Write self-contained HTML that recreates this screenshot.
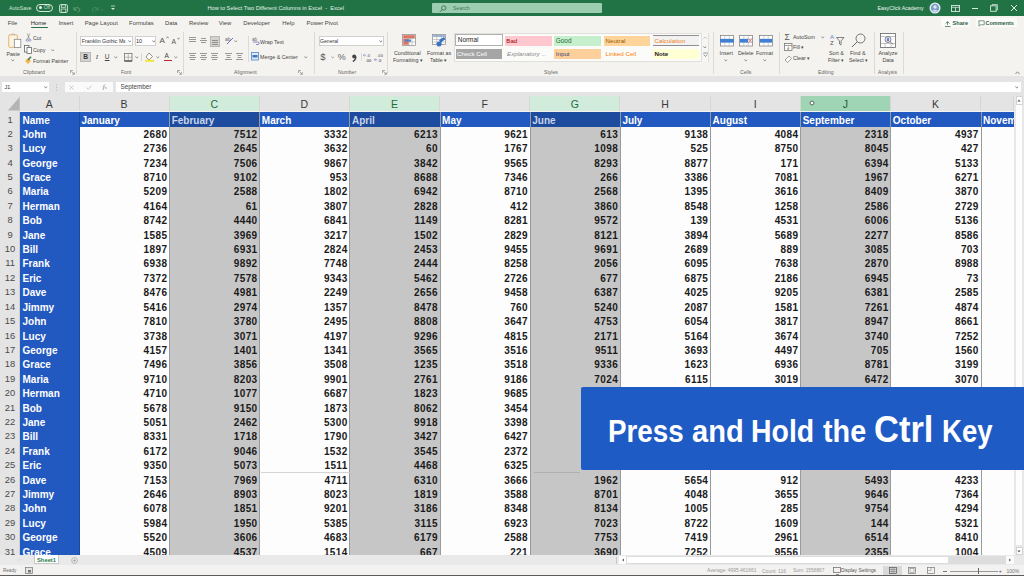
<!DOCTYPE html>
<html><head><meta charset="utf-8">
<style>
*{margin:0;padding:0;box-sizing:border-box}
html,body{width:1024px;height:576px;overflow:hidden;background:#f4f3ef;font-family:"Liberation Sans",sans-serif}
.abs{position:absolute}
#grid{position:absolute;left:0;top:0;width:1014.4px;height:555.4px;overflow:hidden}
.ch{position:absolute;top:96px;height:15.299999999999997px;line-height:17.299999999999997px;background:#e4e4e4;color:#3a3a3a;font-size:10.5px;text-align:center;border-right:1px solid #d6d6d6}
.chs{background:#d2ecdc;color:#1e6b40}
.cha{background:#9fd5b4;color:#1e5e3a}
.rh{position:absolute;left:0;width:20px;background:#e4e4e4;color:#4a4a4a;font-size:9.4px;text-align:center;padding-left:1px;border-right:1px solid #d0d0d0}
.cb{position:absolute;top:126.8px;height:428.59999999999997px}
.blue{background:#2259c0}
.gray{background:#c6c6c6}
.r1{position:absolute;left:20px;width:994.4px;background:#2259c0}
.r1s{position:absolute;background:#1d4b9e}
.vl{position:absolute;top:111.5px;height:443.9px;width:1px;background:#9a9a9a}
.t1,.tn{position:absolute;transform:translateY(0.7px);color:#fff;font-weight:bold;font-size:10px;white-space:nowrap}
.t1s{color:#c9d5ea}
.td{position:absolute;transform:translateY(1.1px);color:#1a1a1a;font-weight:bold;font-size:10px;text-align:right;letter-spacing:0.4px;white-space:nowrap}
#white{position:absolute;left:20px;top:126.8px;width:994.4px;height:428.59999999999997px;background:#fdfdfd}
#banner{position:absolute;left:580.8px;top:387.2px;width:460px;height:82.4px;background:#1f5bc4;border-radius:2px}
.bw{position:absolute;color:#fff;font-weight:bold;white-space:nowrap;line-height:1;transform-origin:0 0}
.tx{white-space:nowrap}
</style></head><body>
<div class="abs" style="left:0px;top:0px;width:1024px;height:15.6px;background:#217346"></div>
<div class="abs tx" style="left:9px;top:1.80px;height:12px;line-height:12px;font-size:5.2px;color:#d6e6dc;font-weight:normal;">AutoSave</div>
<div class="abs" style="left:36px;top:3.5px;width:17px;height:8px;border:1px solid #d6e6dc;border-radius:4px"></div>
<div class="abs" style="left:38.5px;top:5.6px;width:3.8px;height:3.8px;background:#e8f0ea;border-radius:50%"></div>
<div class="abs tx" style="left:44px;top:1.60px;height:12px;line-height:12px;font-size:4.5px;color:#cfe0d5;font-weight:normal;">Off</div>
<svg class="abs" style="left:59px;top:4px;" width="9" height="9" viewBox="0 0 9 9"><rect x="0.6" y="0.6" width="7.8" height="7.8" rx="1" fill="none" stroke="#cfe3d6" stroke-width="1"/><rect x="2.5" y="0.8" width="4" height="2.5" fill="none" stroke="#cfe3d6" stroke-width="0.8"/><rect x="2.2" y="5" width="4.6" height="3.4" fill="none" stroke="#cfe3d6" stroke-width="0.8"/></svg>
<svg class="abs" style="left:72px;top:4px;" width="9" height="9" viewBox="0 0 9 9"><path d="M2 3 L2 6 L5 6" fill="none" stroke="#6c9e80" stroke-width="0.9"/><path d="M2 6 C3 3 7 2.5 8 6 L6 8.5" fill="none" stroke="#6c9e80" stroke-width="0.9"/></svg>
<svg class="abs" style="left:91px;top:4px;" width="12" height="9" viewBox="0 0 12 9"><path d="M7 3 L7 6 L4 6" fill="none" stroke="#4e8a66" stroke-width="0.9"/><path d="M7 6 C6 3 2 2.5 1 6 L3 8.5" fill="none" stroke="#4e8a66" stroke-width="0.9"/><path d="M9.5 5 L11 6.5 L12 5" fill="none" stroke="#4e8a66" stroke-width="0.7"/></svg>
<svg class="abs" style="left:110px;top:5px;" width="6" height="6" viewBox="0 0 6 6"><path d="M1 1 H5" stroke="#cfe3d6" stroke-width="0.8"/><path d="M1 3 L3 5 L5 3 Z" fill="#cfe3d6"/></svg>
<div class="abs tx" style="left:207.5px;top:1.60px;height:12px;line-height:12px;font-size:5.65px;color:#e4efe8;font-weight:normal;">How to Select Two Different Columns in Excel&nbsp;&nbsp;-&nbsp;&nbsp;Excel</div>
<div class="abs" style="left:431.5px;top:2.5px;width:170.5px;height:10px;background:#9dcdb0;border-radius:1px"></div>
<svg class="abs" style="left:439px;top:4.5px;" width="8" height="7" viewBox="0 0 8 7"><circle cx="4.8" cy="3" r="2.2" fill="none" stroke="#2f6b47" stroke-width="0.8"/><path d="M3.2 4.6 L1 6.8" stroke="#2f6b47" stroke-width="0.9"/></svg>
<div class="abs tx" style="left:453px;top:1.60px;height:12px;line-height:12px;font-size:5.3px;color:#3f7a56;font-weight:normal;">Search</div>
<div class="abs tx" style="left:877.5px;top:1.80px;height:12px;line-height:12px;font-size:5.25px;color:#f0f6f2;font-weight:normal;">EasyClick Academy</div>
<svg class="abs" style="left:929px;top:2px;" width="12" height="12" viewBox="0 0 12 12"><circle cx="6" cy="6" r="5.5" fill="#e8eef5"/><circle cx="6" cy="6" r="4.2" fill="#7e9ec8"/><circle cx="6" cy="5" r="1.7" fill="#dfe8f2"/><path d="M3 9.5 C4 7.5 8 7.5 9 9.5" fill="#dfe8f2"/></svg>
<svg class="abs" style="left:951px;top:4.5px;" width="9" height="7" viewBox="0 0 9 7"><rect x="0.5" y="0.5" width="8" height="6" fill="none" stroke="#d8e8de" stroke-width="0.9"/><path d="M0.5 2.3 H8.5 M4.5 2.3 V6.5" stroke="#d8e8de" stroke-width="0.8"/></svg>
<div class="abs" style="left:971.5px;top:7.5px;width:6px;height:0.9px;background:#d8e8de"></div>
<svg class="abs" style="left:990px;top:4px;" width="8" height="8" viewBox="0 0 8 8"><rect x="0.6" y="1.8" width="5.5" height="5.5" fill="none" stroke="#d8e8de" stroke-width="0.9"/><path d="M2 1.8 V0.6 H7.4 V6 H6.1" fill="none" stroke="#d8e8de" stroke-width="0.8"/></svg>
<svg class="abs" style="left:1010px;top:4px;" width="8" height="8" viewBox="0 0 8 8"><path d="M1 1 L7 7 M7 1 L1 7" stroke="#e4efe8" stroke-width="1"/></svg>
<div class="abs" style="left:0px;top:15.6px;width:1024px;height:60px;background:#f4f3ef"></div>
<div class="abs tx" style="left:7.7px;top:17.40px;height:12px;line-height:12px;font-size:5.9px;color:#444;font-weight:normal;">File</div>
<div class="abs tx" style="left:30.7px;top:17.40px;height:12px;line-height:12px;font-size:5.9px;color:#262626;font-weight:normal;">Home</div>
<div class="abs tx" style="left:58.7px;top:17.40px;height:12px;line-height:12px;font-size:5.9px;color:#444;font-weight:normal;">Insert</div>
<div class="abs tx" style="left:84.7px;top:17.40px;height:12px;line-height:12px;font-size:5.9px;color:#444;font-weight:normal;">Page Layout</div>
<div class="abs tx" style="left:129.1px;top:17.40px;height:12px;line-height:12px;font-size:5.9px;color:#444;font-weight:normal;">Formulas</div>
<div class="abs tx" style="left:164.89999999999998px;top:17.40px;height:12px;line-height:12px;font-size:5.9px;color:#444;font-weight:normal;">Data</div>
<div class="abs tx" style="left:188.89999999999998px;top:17.40px;height:12px;line-height:12px;font-size:5.9px;color:#444;font-weight:normal;">Review</div>
<div class="abs tx" style="left:218.7px;top:17.40px;height:12px;line-height:12px;font-size:5.9px;color:#444;font-weight:normal;">View</div>
<div class="abs tx" style="left:243.2px;top:17.40px;height:12px;line-height:12px;font-size:5.9px;color:#444;font-weight:normal;">Developer</div>
<div class="abs tx" style="left:282.3px;top:17.40px;height:12px;line-height:12px;font-size:5.9px;color:#444;font-weight:normal;">Help</div>
<div class="abs tx" style="left:306.5px;top:17.40px;height:12px;line-height:12px;font-size:5.9px;color:#444;font-weight:normal;">Power Pivot</div>
<div class="abs" style="left:31px;top:27.2px;width:17px;height:1.3px;background:#217346;border-radius:1px"></div>
<div class="abs" style="left:941px;top:18.2px;width:28.5px;height:8.8px;background:#fbfbfa;border-radius:1px"></div>
<svg class="abs" style="left:944px;top:19.5px;" width="7" height="7" viewBox="0 0 7 7"><path d="M1 6.5 H6.5 M3.5 5 V2 M1.8 3.5 L3.5 1.5 L5.5 3.5" fill="none" stroke="#4a6f5a" stroke-width="0.8"/></svg>
<div class="abs tx" style="left:952.5px;top:16.80px;height:12px;line-height:12px;font-size:5.6px;color:#2f5f45;font-weight:bold;">Share</div>
<div class="abs" style="left:975.5px;top:18.2px;width:41px;height:8.8px;background:#fbfbfa;border-radius:1px"></div>
<svg class="abs" style="left:977.5px;top:19.5px;" width="7" height="7" viewBox="0 0 7 7"><path d="M0.8 0.8 H6.2 V4.8 H2.5 L1 6.2 V0.8 Z" fill="none" stroke="#4a6f5a" stroke-width="0.7"/></svg>
<div class="abs tx" style="left:985.5px;top:16.80px;height:12px;line-height:12px;font-size:5.5px;color:#2f5f45;font-weight:bold;">Comments</div>
<svg class="abs" style="left:8px;top:33px;" width="14" height="16" viewBox="0 0 14 16"><rect x="0.8" y="1.8" width="8.5" height="12.5" rx="0.6" fill="#fdf3e0" stroke="#dcae6a" stroke-width="0.9"/><path d="M3 2.2 L5 0.6 L7 2.2" fill="none" stroke="#aaa" stroke-width="0.7"/><rect x="6.3" y="6.3" width="6.5" height="8.2" fill="#fff" stroke="#888" stroke-width="0.8"/></svg>
<div class="abs tx" style="left:6.5px;top:47.60px;height:12px;line-height:12px;font-size:5.2px;color:#444;font-weight:normal;">Paste</div>
<svg class="abs" style="left:11.0px;top:59.35px;" width="3.6" height="2.8" viewBox="0 0 3.6 2.8"><path d="M0.4 0.6 L1.8 1.9000000000000001 L3.2 0.6" fill="none" stroke="#666" stroke-width="0.75"/></svg>
<svg class="abs" style="left:24.5px;top:32.5px;" width="7" height="9" viewBox="0 0 7 9"><path d="M2.3 0.5 L4.3 6 M4.7 0.5 L2.7 6" stroke="#777" stroke-width="0.6"/><circle cx="2.2" cy="7.2" r="1.1" fill="none" stroke="#7a7ac0" stroke-width="0.7"/><circle cx="4.8" cy="7.2" r="1.1" fill="none" stroke="#7a7ac0" stroke-width="0.7"/></svg>
<div class="abs tx" style="left:33px;top:32.00px;height:12px;line-height:12px;font-size:5.35px;color:#444;font-weight:normal;">Cut</div>
<svg class="abs" style="left:24px;top:44.5px;" width="8" height="9" viewBox="0 0 8 9"><rect x="0.5" y="0.5" width="4.5" height="6.5" fill="#fff" stroke="#666" stroke-width="0.8"/><rect x="3" y="2.5" width="4.5" height="6" fill="#fff" stroke="#666" stroke-width="0.8"/></svg>
<div class="abs tx" style="left:33px;top:43.90px;height:12px;line-height:12px;font-size:5.35px;color:#444;font-weight:normal;">Copy</div>
<svg class="abs" style="left:50.7px;top:48.6px;" width="3.6" height="2.8" viewBox="0 0 3.6 2.8"><path d="M0.4 0.6 L1.8 1.9000000000000001 L3.2 0.6" fill="none" stroke="#666" stroke-width="0.75"/></svg>
<svg class="abs" style="left:24px;top:55.5px;" width="8" height="9" viewBox="0 0 8 9"><path d="M1 5 L4 2 L7 5 L4 8 Z" fill="#f2b84b"/><path d="M4 4 L7 0.8" stroke="#3c7a52" stroke-width="1.5"/></svg>
<div class="abs tx" style="left:33px;top:55.10px;height:12px;line-height:12px;font-size:5.35px;color:#444;font-weight:normal;">Format Painter</div>
<div class="abs tx" style="left:23px;top:66.00px;height:12px;line-height:12px;font-size:5.1px;color:#666;font-weight:normal;">Clipboard</div>
<svg class="abs" style="left:69.5px;top:69.5px;" width="5" height="5" viewBox="0 0 5 5"><path d="M0.5 0.5 H3 M0.5 0.5 V3 M1.5 1.5 L4.3 4.3 M4.3 2.2 V4.3 H2.2" fill="none" stroke="#777" stroke-width="0.6"/></svg>
<div class="abs" style="left:76px;top:32px;width:0.8px;height:42px;background:#dcdad7"></div>
<div class="abs" style="left:80.4px;top:36.1px;width:52.5px;height:10px;background:#fff;border:0.8px solid #d0d0d0"></div>
<div class="abs tx" style="left:81.8px;top:35.10px;height:12px;line-height:12px;font-size:5.3px;color:#333;font-weight:normal;">Franklin Gothic Mε</div>
<svg class="abs" style="left:127.7px;top:39.800000000000004px;" width="3.6" height="2.8" viewBox="0 0 3.6 2.8"><path d="M0.4 0.6 L1.8 1.9000000000000001 L3.2 0.6" fill="none" stroke="#555" stroke-width="0.75"/></svg>
<div class="abs" style="left:134.5px;top:36.1px;width:21.5px;height:10px;background:#fff;border:0.8px solid #d0d0d0"></div>
<div class="abs tx" style="left:136px;top:35.10px;height:12px;line-height:12px;font-size:5.6px;color:#333;font-weight:normal;">10</div>
<svg class="abs" style="left:151.7px;top:39.800000000000004px;" width="3.6" height="2.8" viewBox="0 0 3.6 2.8"><path d="M0.4 0.6 L1.8 1.9000000000000001 L3.2 0.6" fill="none" stroke="#555" stroke-width="0.75"/></svg>
<div class="abs tx" style="left:159.5px;top:34.80px;height:12px;line-height:12px;font-size:8px;color:#555;font-weight:normal;">A</div>
<svg class="abs" style="left:165.5px;top:36px;" width="3" height="3" viewBox="0 0 3 3"><path d="M0.3 2.3 L1.5 0.7 L2.7 2.3" fill="none" stroke="#555" stroke-width="0.6"/></svg>
<div class="abs tx" style="left:171.5px;top:35.50px;height:12px;line-height:12px;font-size:6.8px;color:#555;font-weight:normal;">A</div>
<svg class="abs" style="left:176.5px;top:36.5px;" width="3" height="3" viewBox="0 0 3 3"><path d="M0.3 0.7 L1.5 2.3 L2.7 0.7" fill="none" stroke="#555" stroke-width="0.6"/></svg>
<div class="abs" style="left:80.4px;top:51.8px;width:10.4px;height:10.2px;background:#d4d3d1;border:0.8px solid #b9b8b6"></div>
<div class="abs tx" style="left:83.2px;top:51.00px;height:12px;line-height:12px;font-size:6.5px;color:#333;font-weight:bold;">B</div>
<div class="abs tx" style="left:95.8px;top:51.00px;height:12px;line-height:12px;font-size:7px;color:#444;font-weight:normal;font-family:'Liberation Serif'"><i>I</i></div>
<div class="abs tx" style="left:104.8px;top:51.00px;height:12px;line-height:12px;font-size:6.5px;color:#444;font-weight:normal;"><u>U</u></div>
<svg class="abs" style="left:114.2px;top:55.800000000000004px;" width="3.6" height="2.8" viewBox="0 0 3.6 2.8"><path d="M0.4 0.6 L1.8 1.9000000000000001 L3.2 0.6" fill="none" stroke="#666" stroke-width="0.75"/></svg>
<svg class="abs" style="left:123.5px;top:52.5px;" width="9" height="9" viewBox="0 0 9 9"><rect x="0.5" y="0.5" width="7.5" height="7.5" fill="none" stroke="#666" stroke-width="0.7"/><path d="M4.25 0.5 V8 M0.5 4.25 H8" stroke="#888" stroke-width="0.5"/><path d="M0.5 8 H8" stroke="#333" stroke-width="1"/></svg>
<svg class="abs" style="left:135.2px;top:55.800000000000004px;" width="3.6" height="2.8" viewBox="0 0 3.6 2.8"><path d="M0.4 0.6 L1.8 1.9000000000000001 L3.2 0.6" fill="none" stroke="#666" stroke-width="0.75"/></svg>
<div class="abs" style="left:141px;top:53px;width:0.6px;height:8px;background:#d6d6d6"></div>
<svg class="abs" style="left:144.5px;top:52px;" width="9" height="10" viewBox="0 0 9 10"><path d="M4 1 L7.5 4.5 L4 8 L1 5 Z" fill="#fff" stroke="#666" stroke-width="0.7"/><rect x="0" y="7.8" width="9" height="2" fill="#f3e43c"/></svg>
<svg class="abs" style="left:156.2px;top:55.800000000000004px;" width="3.6" height="2.8" viewBox="0 0 3.6 2.8"><path d="M0.4 0.6 L1.8 1.9000000000000001 L3.2 0.6" fill="none" stroke="#666" stroke-width="0.75"/></svg>
<div class="abs tx" style="left:164.5px;top:49.50px;height:12px;line-height:12px;font-size:6.5px;color:#444;font-weight:normal;">A</div>
<div class="abs" style="left:163.5px;top:59.5px;width:8px;height:1.8px;background:#c0272d"></div>
<svg class="abs" style="left:174.2px;top:55.800000000000004px;" width="3.6" height="2.8" viewBox="0 0 3.6 2.8"><path d="M0.4 0.6 L1.8 1.9000000000000001 L3.2 0.6" fill="none" stroke="#666" stroke-width="0.75"/></svg>
<div class="abs tx" style="left:121px;top:66.00px;height:12px;line-height:12px;font-size:5.1px;color:#666;font-weight:normal;">Font</div>
<svg class="abs" style="left:176.5px;top:69.5px;" width="5" height="5" viewBox="0 0 5 5"><path d="M0.5 0.5 H3 M0.5 0.5 V3 M1.5 1.5 L4.3 4.3 M4.3 2.2 V4.3 H2.2" fill="none" stroke="#777" stroke-width="0.6"/></svg>
<div class="abs" style="left:183px;top:32px;width:0.8px;height:42px;background:#dcdad7"></div>
<svg class="abs" style="left:189px;top:35px;" width="7" height="12" viewBox="0 0 7 12"><path d="M0.00 2.5 H7.00" stroke="#7a7a7a" stroke-width="0.75"/><path d="M0.00 4.5 H7.00" stroke="#7a7a7a" stroke-width="0.75"/><path d="M0.00 6.5 H7.00" stroke="#7a7a7a" stroke-width="0.75"/></svg>
<svg class="abs" style="left:200px;top:35px;" width="7" height="12" viewBox="0 0 7 12"><path d="M1.00 3.5 H6.00" stroke="#7a7a7a" stroke-width="0.75"/><path d="M0.00 5.5 H7.00" stroke="#7a7a7a" stroke-width="0.75"/><path d="M1.00 7.5 H6.00" stroke="#7a7a7a" stroke-width="0.75"/></svg>
<div class="abs" style="left:209.5px;top:36px;width:10.5px;height:11px;background:#d4d3d1;border:0.8px solid #b9b8b6"></div>
<svg class="abs" style="left:211.5px;top:35px;" width="6.5" height="12" viewBox="0 0 6.5 12"><path d="M0.00 5.5 H6.50" stroke="#7a7a7a" stroke-width="0.75"/><path d="M0.00 7.5 H6.50" stroke="#7a7a7a" stroke-width="0.75"/><path d="M0.00 9.5 H6.50" stroke="#7a7a7a" stroke-width="0.75"/></svg>
<svg class="abs" style="left:225px;top:36px;" width="12" height="9" viewBox="0 0 12 9"><text x="0" y="5" font-size="5" fill="#666" font-family="Liberation Sans">ab</text><path d="M2 8 L8 2" stroke="#5b5bb6" stroke-width="0.9"/></svg>
<svg class="abs" style="left:234.2px;top:39.6px;" width="3.6" height="2.8" viewBox="0 0 3.6 2.8"><path d="M0.4 0.6 L1.8 1.9000000000000001 L3.2 0.6" fill="none" stroke="#666" stroke-width="0.75"/></svg>
<svg class="abs" style="left:189px;top:51px;" width="7" height="12" viewBox="0 0 7 12"><path d="M0.00 2.5 H7.00" stroke="#7a7a7a" stroke-width="0.75"/><path d="M1.00 4.5 H6.00" stroke="#7a7a7a" stroke-width="0.75"/><path d="M0.00 6.5 H7.00" stroke="#7a7a7a" stroke-width="0.75"/><path d="M1.00 8.5 H6.00" stroke="#7a7a7a" stroke-width="0.75"/></svg>
<svg class="abs" style="left:200px;top:51px;" width="7" height="12" viewBox="0 0 7 12"><path d="M0.00 2.5 H7.00" stroke="#7a7a7a" stroke-width="0.75"/><path d="M1.00 4.5 H6.00" stroke="#7a7a7a" stroke-width="0.75"/><path d="M0.00 6.5 H7.00" stroke="#7a7a7a" stroke-width="0.75"/><path d="M1.00 8.5 H6.00" stroke="#7a7a7a" stroke-width="0.75"/></svg>
<svg class="abs" style="left:211px;top:51px;" width="7" height="12" viewBox="0 0 7 12"><path d="M0.00 2.5 H7.00" stroke="#7a7a7a" stroke-width="0.75"/><path d="M1.00 4.5 H6.00" stroke="#7a7a7a" stroke-width="0.75"/><path d="M0.00 6.5 H7.00" stroke="#7a7a7a" stroke-width="0.75"/><path d="M1.00 8.5 H6.00" stroke="#7a7a7a" stroke-width="0.75"/></svg>
<svg class="abs" style="left:225px;top:51px;" width="7" height="12" viewBox="0 0 7 12"><path d="M0.00 2.5 H7.00" stroke="#7a7a7a" stroke-width="0.75"/><path d="M1.50 4.5 H5.50" stroke="#7a7a7a" stroke-width="0.75"/><path d="M1.50 6.5 H5.50" stroke="#7a7a7a" stroke-width="0.75"/><path d="M0.00 8.5 H7.00" stroke="#7a7a7a" stroke-width="0.75"/></svg>
<svg class="abs" style="left:236px;top:51px;" width="7" height="12" viewBox="0 0 7 12"><path d="M0.00 2.5 H7.00" stroke="#7a7a7a" stroke-width="0.75"/><path d="M1.50 4.5 H5.50" stroke="#7a7a7a" stroke-width="0.75"/><path d="M1.50 6.5 H5.50" stroke="#7a7a7a" stroke-width="0.75"/><path d="M0.00 8.5 H7.00" stroke="#7a7a7a" stroke-width="0.75"/></svg>
<div class="abs" style="left:247.5px;top:35.5px;width:0.8px;height:26px;background:#dcdad7"></div>
<svg class="abs" style="left:251.5px;top:36px;" width="8" height="9" viewBox="0 0 8 9"><text x="0" y="4.5" font-size="4.5" fill="#666" font-family="Liberation Sans">ab</text><path d="M1 6 H6 C7.5 6 7.5 8.5 6 8.5 H4" fill="none" stroke="#5b5bb6" stroke-width="0.7"/></svg>
<div class="abs tx" style="left:260px;top:36.00px;height:12px;line-height:12px;font-size:5.35px;color:#444;font-weight:normal;">Wrap Text</div>
<svg class="abs" style="left:251px;top:52px;" width="8" height="8.5" viewBox="0 0 8 8.5"><rect x="0.5" y="0.5" width="7" height="7.5" fill="#dce9f7" stroke="#4f86c6" stroke-width="0.8"/><rect x="1.5" y="3" width="5" height="2.5" fill="#3d78c2"/></svg>
<div class="abs tx" style="left:260px;top:51.40px;height:12px;line-height:12px;font-size:5.35px;color:#444;font-weight:normal;">Merge &amp; Center</div>
<svg class="abs" style="left:304.2px;top:56.1px;" width="3.6" height="2.8" viewBox="0 0 3.6 2.8"><path d="M0.4 0.6 L1.8 1.9000000000000001 L3.2 0.6" fill="none" stroke="#666" stroke-width="0.75"/></svg>
<div class="abs tx" style="left:234px;top:66.00px;height:12px;line-height:12px;font-size:5.1px;color:#666;font-weight:normal;">Alignment</div>
<svg class="abs" style="left:297.5px;top:69.5px;" width="5" height="5" viewBox="0 0 5 5"><path d="M0.5 0.5 H3 M0.5 0.5 V3 M1.5 1.5 L4.3 4.3 M4.3 2.2 V4.3 H2.2" fill="none" stroke="#777" stroke-width="0.6"/></svg>
<div class="abs" style="left:314px;top:32px;width:0.8px;height:42px;background:#dcdad7"></div>
<div class="abs" style="left:318.5px;top:36.1px;width:65px;height:10.2px;background:#fff;border:0.8px solid #d0d0d0"></div>
<div class="abs tx" style="left:320px;top:35.20px;height:12px;line-height:12px;font-size:5.1px;color:#333;font-weight:normal;">General</div>
<svg class="abs" style="left:379.2px;top:39.9px;" width="3.6" height="2.8" viewBox="0 0 3.6 2.8"><path d="M0.4 0.6 L1.8 1.9000000000000001 L3.2 0.6" fill="none" stroke="#555" stroke-width="0.75"/></svg>
<div class="abs tx" style="left:320.3px;top:50.60px;height:12px;line-height:12px;font-size:9.5px;color:#555;font-weight:normal;">$</div>
<svg class="abs" style="left:330.7px;top:55.9px;" width="3.6" height="2.8" viewBox="0 0 3.6 2.8"><path d="M0.4 0.6 L1.8 1.9000000000000001 L3.2 0.6" fill="none" stroke="#888" stroke-width="0.75"/></svg>
<div class="abs tx" style="left:337.8px;top:50.80px;height:12px;line-height:12px;font-size:9px;color:#666;font-weight:normal;">%</div>
<svg class="abs" style="left:350.5px;top:53.5px;" width="6" height="8" viewBox="0 0 6 8"><circle cx="3.2" cy="2.6" r="2" fill="#444"/><path d="M5 2.8 C5 5 4 6.5 1.8 7.6" fill="none" stroke="#444" stroke-width="1.2"/></svg>
<div class="abs" style="left:360.5px;top:52.5px;width:0.6px;height:8.5px;background:#dcdcdc"></div>
<svg class="abs" style="left:362.5px;top:52.5px;" width="10" height="9" viewBox="0 0 10 9"><path d="M0.3 2.2 H3.2 M1.5 1 L0.3 2.2 L1.5 3.4" fill="none" stroke="#6a8fcf" stroke-width="0.6"/><text x="3.6" y="3.9" font-size="4.2" fill="#888" font-family="Liberation Sans" font-weight="bold">.0</text><text x="2.6" y="8.6" font-size="4.2" fill="#777" font-family="Liberation Sans" font-weight="bold">.00</text></svg>
<svg class="abs" style="left:373.5px;top:52.5px;" width="10" height="9" viewBox="0 0 10 9"><text x="3.2" y="3.9" font-size="4.2" fill="#888" font-family="Liberation Sans" font-weight="bold">.00</text><path d="M0.3 6.7 H3.2 M1.5 5.5 L0.3 6.7 L1.5 7.9" fill="none" stroke="#6a6acf" stroke-width="0.6"/><text x="3.8" y="8.6" font-size="4.2" fill="#777" font-family="Liberation Sans" font-weight="bold">.0</text></svg>
<div class="abs tx" style="left:338px;top:66.00px;height:12px;line-height:12px;font-size:5.1px;color:#666;font-weight:normal;">Number</div>
<svg class="abs" style="left:381.5px;top:69.5px;" width="5" height="5" viewBox="0 0 5 5"><path d="M0.5 0.5 H3 M0.5 0.5 V3 M1.5 1.5 L4.3 4.3 M4.3 2.2 V4.3 H2.2" fill="none" stroke="#777" stroke-width="0.6"/></svg>
<div class="abs" style="left:386.5px;top:32px;width:0.8px;height:42px;background:#dcdad7"></div>
<svg class="abs" style="left:401.5px;top:34px;" width="14" height="12" viewBox="0 0 14 12"><rect x="0.5" y="0.5" width="13" height="11" fill="#fff" stroke="#888" stroke-width="0.7"/><rect x="1.2" y="1.2" width="11.6" height="3" fill="#e8705a"/><rect x="1.2" y="4.8" width="5.5" height="6" fill="#e8705a"/><rect x="3" y="5.5" width="6" height="2.3" fill="#4a7fd0"/><path d="M7 0.5 V11.5 M0.5 4.5 H13.5 M0.5 8 H13.5 M10 0.5 V11.5" stroke="#999" stroke-width="0.5"/></svg>
<div class="abs tx" style="left:394px;top:46.80px;height:12px;line-height:12px;font-size:5.35px;color:#444;font-weight:normal;">Conditional</div>
<div class="abs tx" style="left:393px;top:54.30px;height:12px;line-height:12px;font-size:5.35px;color:#444;font-weight:normal;">Formatting ▾</div>
<svg class="abs" style="left:431.5px;top:34px;" width="15" height="13" viewBox="0 0 15 13"><rect x="0.5" y="0.5" width="13" height="10" fill="#fff" stroke="#888" stroke-width="0.7"/><rect x="0.8" y="0.8" width="12.4" height="2.3" fill="#9fb6d8"/><path d="M4.8 0.5 V10.5 M9.2 0.5 V10.5 M0.5 5.5 H13.5 M0.5 8 H13.5" stroke="#999" stroke-width="0.5"/><path d="M7 6 L12 3 L13.5 5 L8.5 9 Z" fill="#3c72c4"/><circle cx="7" cy="10" r="2.5" fill="#3c72c4"/></svg>
<div class="abs tx" style="left:427px;top:46.90px;height:12px;line-height:12px;font-size:5.35px;color:#444;font-weight:normal;">Format as</div>
<div class="abs tx" style="left:430px;top:54.20px;height:12px;line-height:12px;font-size:5.35px;color:#444;font-weight:normal;">Table ▾</div>
<div class="abs" style="left:453.5px;top:33px;width:255px;height:28.5px;background:#fbfbfa;border:0.8px solid #e1dfdc"></div>
<div class="abs" style="left:455px;top:34.3px;width:47.5px;height:12.2px;background:#fff;border:1px solid #b0b0b0"></div>
<div class="abs tx" style="left:457.8px;top:34.40px;height:12px;line-height:12px;font-size:6.4px;color:#222;font-weight:normal;">Normal</div>
<div class="abs" style="left:505px;top:35.6px;width:47px;height:10px;background:#ffc7ce"></div>
<div class="abs tx" style="left:506.3px;top:34.60px;height:12px;line-height:12px;font-size:6.2px;color:#9c0006;font-weight:normal;">Bad</div>
<div class="abs" style="left:554.4px;top:35.6px;width:46.2px;height:10px;background:#c6efce"></div>
<div class="abs tx" style="left:555.8px;top:34.60px;height:12px;line-height:12px;font-size:6.4px;color:#1f6b30;font-weight:normal;">Good</div>
<div class="abs" style="left:604px;top:35.6px;width:46px;height:10px;background:#fdd59a"></div>
<div class="abs tx" style="left:605.5px;top:34.60px;height:12px;line-height:12px;font-size:6.2px;color:#9c5700;font-weight:normal;">Neutral</div>
<div class="abs" style="left:653px;top:34.8px;width:45.8px;height:11px;background:#f2f2f2;border-top:0.8px solid #8f8f8f;border-bottom:0.8px solid #8f8f8f"></div>
<div class="abs tx" style="left:654.5px;top:34.60px;height:12px;line-height:12px;font-size:6.2px;color:#f08020;font-weight:normal;">Calculation</div>
<div class="abs" style="left:455.6px;top:48.6px;width:46.4px;height:10px;background:#a5a5a5"></div>
<div class="abs tx" style="left:457px;top:47.60px;height:12px;line-height:12px;font-size:6.2px;color:#fff;font-weight:normal;">Check Cell</div>
<div class="abs tx" style="left:507px;top:47.60px;height:12px;line-height:12px;font-size:6.2px;color:#8a8a8a;font-weight:normal;"><i>Explanatory ...</i></div>
<div class="abs" style="left:554.4px;top:48.6px;width:46.2px;height:10px;background:#fdcf9a"></div>
<div class="abs tx" style="left:555.8px;top:47.60px;height:12px;line-height:12px;font-size:6.2px;color:#3f3f76;font-weight:normal;">Input</div>
<div class="abs tx" style="left:605.5px;top:47.60px;height:12px;line-height:12px;font-size:6.2px;color:#fa7d00;font-weight:normal;">Linked Cell</div>
<div class="abs" style="left:653px;top:48.6px;width:45.8px;height:10px;background:#ffffd4"></div>
<div class="abs tx" style="left:654.5px;top:47.60px;height:12px;line-height:12px;font-size:6.2px;color:#222;font-weight:bold;">Note</div>
<div class="abs" style="left:701.2px;top:33px;width:7.3px;height:28.5px;background:#f6f6f5;border-left:0.8px solid #e1dfdc"></div>
<svg class="abs" style="left:703px;top:36.3px;" width="4" height="3" viewBox="0 0 4 3"><path d="M0.5 2.5 L2 1 L3.5 2.5" fill="none" stroke="#aaa" stroke-width="0.6"/></svg>
<svg class="abs" style="left:703.1px;top:45.6px;" width="3.6" height="2.8" viewBox="0 0 3.6 2.8"><path d="M0.4 0.6 L1.8 1.9000000000000001 L3.2 0.6" fill="none" stroke="#555" stroke-width="0.75"/></svg>
<svg class="abs" style="left:702.5px;top:51.5px;" width="5" height="6" viewBox="0 0 5 6"><path d="M0.3 1 H4.7" stroke="#555" stroke-width="0.6"/><path d="M0.7 2.5 L2.5 4.5 L4.3 2.5" fill="none" stroke="#555" stroke-width="0.6"/></svg>
<div class="abs tx" style="left:544px;top:66.00px;height:12px;line-height:12px;font-size:5.1px;color:#666;font-weight:normal;">Styles</div>
<div class="abs" style="left:712.5px;top:32px;width:0.8px;height:42px;background:#dcdad7"></div>
<svg class="abs" style="left:719.8px;top:34.9px;" width="14" height="12" viewBox="0 0 14 12"><rect x="0.5" y="0.5" width="13" height="10.5" fill="#fff" stroke="#777" stroke-width="0.7"/><path d="M4.8 0.5 V11 M9.2 0.5 V11 M0.5 4 H13.5 M0.5 7.5 H13.5" stroke="#9ab" stroke-width="0.5"/><rect x="0" y="4" width="14" height="3.5" fill="#3f80d6"/></svg>
<div class="abs tx" style="left:719.5px;top:46.90px;height:12px;line-height:12px;font-size:5.35px;color:#444;font-weight:normal;">Insert</div>
<svg class="abs" style="left:724.4000000000001px;top:59.1px;" width="3.6" height="2.8" viewBox="0 0 3.6 2.8"><path d="M0.4 0.6 L1.8 1.9000000000000001 L3.2 0.6" fill="none" stroke="#666" stroke-width="0.75"/></svg>
<svg class="abs" style="left:739px;top:34.9px;" width="14" height="12" viewBox="0 0 14 12"><rect x="0.5" y="0.5" width="13" height="10.5" fill="#fff" stroke="#777" stroke-width="0.7"/><path d="M4.8 0.5 V11 M9.2 0.5 V11 M0.5 4 H13.5 M0.5 7.5 H13.5" stroke="#9ab" stroke-width="0.5"/><rect x="1" y="4" width="8" height="3.5" fill="#3f80d6"/><path d="M9.5 3.5 L13 7.5 M13 3.5 L9.5 7.5" stroke="#d9534f" stroke-width="0.8"/></svg>
<div class="abs tx" style="left:738px;top:46.90px;height:12px;line-height:12px;font-size:5.35px;color:#444;font-weight:normal;">Delete</div>
<svg class="abs" style="left:743.8000000000001px;top:59.1px;" width="3.6" height="2.8" viewBox="0 0 3.6 2.8"><path d="M0.4 0.6 L1.8 1.9000000000000001 L3.2 0.6" fill="none" stroke="#666" stroke-width="0.75"/></svg>
<svg class="abs" style="left:758.5px;top:34.9px;" width="14" height="12" viewBox="0 0 14 12"><rect x="0.5" y="0.5" width="13" height="10.5" fill="#fff" stroke="#777" stroke-width="0.7"/><path d="M4.8 0.5 V11 M9.2 0.5 V11 M0.5 4 H13.5 M0.5 7.5 H13.5" stroke="#9ab" stroke-width="0.5"/><rect x="0.8" y="4" width="12.4" height="3.5" fill="#3f80d6"/></svg>
<div class="abs tx" style="left:756px;top:46.90px;height:12px;line-height:12px;font-size:5.35px;color:#444;font-weight:normal;">Format</div>
<svg class="abs" style="left:763.2px;top:59.1px;" width="3.6" height="2.8" viewBox="0 0 3.6 2.8"><path d="M0.4 0.6 L1.8 1.9000000000000001 L3.2 0.6" fill="none" stroke="#666" stroke-width="0.75"/></svg>
<div class="abs tx" style="left:740px;top:66.00px;height:12px;line-height:12px;font-size:5.1px;color:#666;font-weight:normal;">Cells</div>
<div class="abs" style="left:778.7px;top:32px;width:0.8px;height:42px;background:#dcdad7"></div>
<div class="abs tx" style="left:784.5px;top:31.00px;height:12px;line-height:12px;font-size:8.5px;color:#555;font-weight:normal;">Σ</div>
<div class="abs tx" style="left:793px;top:31.00px;height:12px;line-height:12px;font-size:5.35px;color:#444;font-weight:normal;">AutoSum</div>
<svg class="abs" style="left:821.2px;top:35.9px;" width="3.6" height="2.8" viewBox="0 0 3.6 2.8"><path d="M0.4 0.6 L1.8 1.9000000000000001 L3.2 0.6" fill="none" stroke="#666" stroke-width="0.75"/></svg>
<svg class="abs" style="left:784px;top:43px;" width="8.5" height="8" viewBox="0 0 8.5 8"><rect x="0.5" y="0.5" width="7.5" height="7" fill="#fff" stroke="#666" stroke-width="0.7"/><path d="M0.5 2.5 H8 M4.25 3.5 V6.5 M3 5.3 L4.25 6.5 L5.5 5.3" fill="none" stroke="#666" stroke-width="0.6"/></svg>
<div class="abs tx" style="left:793px;top:41.30px;height:12px;line-height:12px;font-size:5.35px;color:#444;font-weight:normal;">Fill ▾</div>
<svg class="abs" style="left:784px;top:54px;" width="8" height="9" viewBox="0 0 8 9"><path d="M1 6 L5 2 L7.5 4.5 L3.5 8.5 Z" fill="#fff" stroke="#777" stroke-width="0.7"/></svg>
<div class="abs tx" style="left:793px;top:52.00px;height:12px;line-height:12px;font-size:5.35px;color:#444;font-weight:normal;">Clear ▾</div>
<svg class="abs" style="left:829.5px;top:32.5px;" width="15" height="14" viewBox="0 0 15 14"><text x="0" y="5.5" font-size="6" fill="#4f7fc6" font-family="Liberation Sans">A</text><text x="0" y="12" font-size="6" fill="#555" font-family="Liberation Sans">Z</text><path d="M6.5 4.5 H14 L11 8 V12 L9.5 11 V8 Z" fill="none" stroke="#666" stroke-width="0.8"/></svg>
<div class="abs tx" style="left:829px;top:46.60px;height:12px;line-height:12px;font-size:5.35px;color:#444;font-weight:normal;">Sort &amp;</div>
<div class="abs tx" style="left:828px;top:54.20px;height:12px;line-height:12px;font-size:5.35px;color:#444;font-weight:normal;">Filter ▾</div>
<svg class="abs" style="left:850.5px;top:32.5px;" width="15" height="15" viewBox="0 0 15 15"><circle cx="9.5" cy="5.5" r="4.5" fill="none" stroke="#666" stroke-width="0.9"/><path d="M6.3 8.7 L1 14" stroke="#666" stroke-width="1"/></svg>
<div class="abs tx" style="left:850px;top:46.60px;height:12px;line-height:12px;font-size:5.35px;color:#444;font-weight:normal;">Find &amp;</div>
<div class="abs tx" style="left:849px;top:54.20px;height:12px;line-height:12px;font-size:5.35px;color:#444;font-weight:normal;">Select ▾</div>
<div class="abs tx" style="left:818px;top:66.00px;height:12px;line-height:12px;font-size:5.1px;color:#666;font-weight:normal;">Editing</div>
<div class="abs" style="left:873.7px;top:32px;width:0.8px;height:42px;background:#dcdad7"></div>
<svg class="abs" style="left:880px;top:32.5px;" width="16" height="15" viewBox="0 0 16 15"><rect x="0.5" y="0.5" width="15" height="14" fill="#fff" stroke="#666" stroke-width="0.8"/><path d="M0.5 3.5 H15.5 M0.5 10.5 H15.5 M5 10.5 V15 M11 10.5 V15" stroke="#888" stroke-width="0.5"/><circle cx="8" cy="6.5" r="3" fill="#dfe6f5" stroke="#555" stroke-width="0.7"/><path d="M10 8.5 L13 11.5" stroke="#555" stroke-width="0.8"/><rect x="7.2" y="5.2" width="1.6" height="2.8" fill="#5b5bb6"/></svg>
<div class="abs tx" style="left:878.5px;top:46.60px;height:12px;line-height:12px;font-size:5.35px;color:#444;font-weight:normal;">Analyze</div>
<div class="abs tx" style="left:882.5px;top:54.20px;height:12px;line-height:12px;font-size:5.35px;color:#444;font-weight:normal;">Data</div>
<div class="abs tx" style="left:878px;top:66.00px;height:12px;line-height:12px;font-size:5.1px;color:#666;font-weight:normal;">Analysis</div>
<div class="abs" style="left:902.5px;top:32px;width:0.8px;height:42px;background:#dcdad7"></div>
<svg class="abs" style="left:1015px;top:71px;" width="5" height="3.5" viewBox="0 0 5 3.5"><path d="M0.4 3 L2.5 0.8 L4.6 3" fill="none" stroke="#666" stroke-width="0.75"/></svg>
<div class="abs" style="left:0px;top:75.5px;width:1024px;height:22px;background:#e4e4e4"></div>
<div class="abs" style="left:2px;top:81.8px;width:47px;height:10.2px;background:#fff"></div>
<div class="abs tx" style="left:4.5px;top:81.00px;height:12px;line-height:12px;font-size:5.6px;color:#333;font-weight:normal;">J1</div>
<svg class="abs" style="left:44.2px;top:85.8px;" width="3.6" height="2.8" viewBox="0 0 3.6 2.8"><path d="M0.4 0.6 L1.8 1.9000000000000001 L3.2 0.6" fill="none" stroke="#555" stroke-width="0.75"/></svg>
<svg class="abs" style="left:54.5px;top:83.5px;" width="3" height="7" viewBox="0 0 3 7"><circle cx="1.5" cy="1" r="0.5" fill="#aaa"/><circle cx="1.5" cy="3.5" r="0.5" fill="#aaa"/><circle cx="1.5" cy="6" r="0.5" fill="#aaa"/></svg>
<div class="abs" style="left:64.5px;top:81.8px;width:48px;height:10.2px;background:#fafafa"></div>
<svg class="abs" style="left:69px;top:84.5px;" width="5" height="5" viewBox="0 0 5 5"><path d="M0.5 0.5 L4.5 4.5 M4.5 0.5 L0.5 4.5" stroke="#b5b5b5" stroke-width="0.7"/></svg>
<svg class="abs" style="left:85.5px;top:84.5px;" width="6" height="5" viewBox="0 0 6 5"><path d="M0.5 2.5 L2.3 4.3 L5.5 0.7" fill="none" stroke="#b5b5b5" stroke-width="0.7"/></svg>
<div class="abs tx" style="left:102.8px;top:80.80px;height:12px;line-height:12px;font-size:7px;color:#777;font-weight:normal;font-family:'Liberation Serif'"><i>f</i><span style='font-size:4px'>x</span></div>
<div class="abs" style="left:115.5px;top:81.8px;width:905.3px;height:10.2px;background:#fff"></div>
<div class="abs tx" style="left:120.5px;top:81.00px;height:12px;line-height:12px;font-size:6.3px;color:#444;font-weight:normal;">September</div>
<svg class="abs" style="left:1015.2px;top:85.8px;" width="3.6" height="2.8" viewBox="0 0 3.6 2.8"><path d="M0.4 0.6 L1.8 1.9000000000000001 L3.2 0.6" fill="none" stroke="#555" stroke-width="0.75"/></svg>
<div class="abs" style="left:0px;top:555.4px;width:1024px;height:9.8px;background:#e9e9e9"></div>
<svg class="abs" style="left:15.5px;top:557.5px;" width="8" height="5" viewBox="0 0 8 5"><path d="M2 2.5 L3.5 1 M2 2.5 L3.5 4 M6 2.5 L4.5 1" fill="none" stroke="#c4c4c4" stroke-width="0.5"/></svg>
<div class="abs" style="left:33.8px;top:555.4px;width:25.6px;height:8.4px;background:#fff;border:0.8px solid #c9c9c9;border-top:none"></div>
<div class="abs tx" style="left:37px;top:554.00px;height:12px;line-height:12px;font-size:5.8px;color:#2d7a4f;font-weight:bold;">Sheet1</div>
<svg class="abs" style="left:71px;top:556.8px;" width="7" height="7" viewBox="0 0 7 7"><circle cx="3.5" cy="3.5" r="2.9" fill="none" stroke="#999" stroke-width="0.6"/><path d="M3.5 1.8 V5.2 M1.8 3.5 H5.2" stroke="#999" stroke-width="0.6"/></svg>
<div class="abs" style="left:616.2px;top:556.5px;width:0.6px;height:7px;background:#c8c8c8"></div>
<div class="abs" style="left:619.3px;top:555.8px;width:6.8px;height:8px;background:#fff"></div>
<svg class="abs" style="left:620.5px;top:557.8px;" width="4" height="4" viewBox="0 0 4 4"><path d="M3 0.5 L1 2 L3 3.5 Z" fill="#666"/></svg>
<div class="abs" style="left:625.5px;top:555.8px;width:324px;height:8.2px;background:#fff;border:0.5px solid #dcdcdc"></div>
<div class="abs" style="left:1006px;top:555.8px;width:8px;height:8px;background:#fafafa"></div>
<svg class="abs" style="left:1008px;top:557.8px;" width="4" height="4" viewBox="0 0 4 4"><path d="M1 0.5 L3 2 L1 3.5 Z" fill="#666"/></svg>
<div class="abs" style="left:1014.4px;top:95.5px;width:9.6px;height:460px;background:#e8e8e8"></div>
<div class="abs" style="left:1016px;top:105px;width:6px;height:440px;background:#fdfdfd"></div>
<div class="abs" style="left:1015.5px;top:96px;width:7px;height:8.5px;background:#fff;border:0.6px solid #d4d4d4"></div>
<svg class="abs" style="left:1017px;top:98.8px;" width="4" height="3" viewBox="0 0 4 3"><path d="M0.4 2.6 L2 0.6 L3.6 2.6 Z" fill="#555"/></svg>
<div class="abs" style="left:1015.5px;top:546.5px;width:7px;height:8.5px;background:#fff;border:0.6px solid #d4d4d4"></div>
<svg class="abs" style="left:1017px;top:549.5px;" width="4" height="3" viewBox="0 0 4 3"><path d="M0.4 0.4 L2 2.4 L3.6 0.4 Z" fill="#555"/></svg>
<div class="abs" style="left:948px;top:555.8px;width:58px;height:8.2px;background:#dddddd"></div>
<div class="abs" style="left:0px;top:565.2px;width:1024px;height:9.4px;background:#f3f2f1"></div>
<div class="abs tx" style="left:3px;top:565.00px;height:12px;line-height:12px;font-size:4.6px;color:#6a6a6a;font-weight:normal;">Ready</div>
<svg class="abs" style="left:24.5px;top:567.3px;" width="8" height="7" viewBox="0 0 8 7"><rect x="0.5" y="0.5" width="7" height="6" fill="#e4e4e4" stroke="#777" stroke-width="0.7"/><rect x="3" y="3" width="3" height="2.5" fill="#777"/></svg>
<div class="abs tx" style="left:707px;top:565.00px;height:12px;line-height:12px;font-size:4.9px;color:#999;font-weight:normal;">Average: 4995.461661</div>
<div class="abs tx" style="left:762px;top:565.00px;height:12px;line-height:12px;font-size:5.0px;color:#999;font-weight:normal;">Count: 116</div>
<div class="abs tx" style="left:793px;top:565.00px;height:12px;line-height:12px;font-size:4.85px;color:#999;font-weight:normal;">Sum: 1558867</div>
<svg class="abs" style="left:832.5px;top:567px;" width="9" height="8" viewBox="0 0 9 8"><rect x="0.5" y="0.5" width="7" height="5" fill="none" stroke="#666" stroke-width="0.7"/><path d="M3 7.5 H6" stroke="#666" stroke-width="0.7"/></svg>
<div class="abs tx" style="left:841px;top:565.00px;height:12px;line-height:12px;font-size:4.9px;color:#555;font-weight:normal;">Display Settings</div>
<div class="abs" style="left:883px;top:565.5px;width:19px;height:9px;background:#d9d9d9"></div>
<svg class="abs" style="left:888.5px;top:567.3px;" width="8" height="7" viewBox="0 0 8 7"><rect x="0.5" y="0.5" width="7" height="6" fill="none" stroke="#555" stroke-width="0.7"/><path d="M0.5 2.5 H7.5 M0.5 4.5 H7.5 M3 0.5 V6.5 M5 0.5 V6.5" stroke="#555" stroke-width="0.4"/></svg>
<svg class="abs" style="left:908px;top:567.3px;" width="8" height="7" viewBox="0 0 8 7"><rect x="0.5" y="0.5" width="7" height="6" fill="none" stroke="#777" stroke-width="0.7"/><rect x="2" y="1.5" width="4" height="4" fill="none" stroke="#777" stroke-width="0.5"/></svg>
<svg class="abs" style="left:927px;top:567.3px;" width="8" height="7" viewBox="0 0 8 7"><rect x="0.5" y="0.5" width="7" height="6" fill="none" stroke="#777" stroke-width="0.7"/><path d="M0.5 3.5 H4 V0.5" fill="none" stroke="#777" stroke-width="0.5"/></svg>
<div class="abs" style="left:943px;top:570.6px;width:4px;height:0.7px;background:#777"></div>
<div class="abs" style="left:950px;top:570.8px;width:48px;height:0.6px;background:#999"></div>
<div class="abs" style="left:977.5px;top:568px;width:1.6px;height:6px;background:#666"></div>
<div class="abs tx" style="left:998.5px;top:564.60px;height:12px;line-height:12px;font-size:6px;color:#666;font-weight:normal;">+</div>
<div class="abs tx" style="left:1006.5px;top:565.00px;height:12px;line-height:12px;font-size:5px;color:#777;font-weight:normal;">100%</div>
<div class="abs" style="left:0px;top:574.5px;width:1024px;height:1.5px;background:#5c5c5c"></div>
<div id="white"></div>
<div id="grid">
<div class="ch" style="left:20.00px;width:59.50px">A</div>
<div class="ch" style="left:79.50px;width:90.15px">B</div>
<div class="ch chs" style="left:169.65px;width:90.15px">C</div>
<div class="ch" style="left:259.80px;width:90.15px">D</div>
<div class="ch chs" style="left:349.95px;width:90.15px">E</div>
<div class="ch" style="left:440.10px;width:90.15px">F</div>
<div class="ch chs" style="left:530.25px;width:90.15px">G</div>
<div class="ch" style="left:620.40px;width:90.15px">H</div>
<div class="ch" style="left:710.55px;width:90.15px">I</div>
<div class="ch chs cha" style="left:800.70px;width:90.15px">J</div>
<div class="ch" style="left:890.85px;width:90.15px">K</div>
<div class="ch" style="left:981.00px;width:33.40px"></div>
<div class="rh" style="top:111.50px;height:15.30px;line-height:15.30px">1</div>
<div class="rh" style="top:126.80px;height:14.41px;line-height:14.41px">2</div>
<div class="rh" style="top:141.21px;height:14.41px;line-height:14.41px">3</div>
<div class="rh" style="top:155.62px;height:14.41px;line-height:14.41px">4</div>
<div class="rh" style="top:170.03px;height:14.41px;line-height:14.41px">5</div>
<div class="rh" style="top:184.44px;height:14.41px;line-height:14.41px">6</div>
<div class="rh" style="top:198.85px;height:14.41px;line-height:14.41px">7</div>
<div class="rh" style="top:213.26px;height:14.41px;line-height:14.41px">8</div>
<div class="rh" style="top:227.67px;height:14.41px;line-height:14.41px">9</div>
<div class="rh" style="top:242.08px;height:14.41px;line-height:14.41px">10</div>
<div class="rh" style="top:256.49px;height:14.41px;line-height:14.41px">11</div>
<div class="rh" style="top:270.90px;height:14.41px;line-height:14.41px">12</div>
<div class="rh" style="top:285.31px;height:14.41px;line-height:14.41px">13</div>
<div class="rh" style="top:299.72px;height:14.41px;line-height:14.41px">14</div>
<div class="rh" style="top:314.13px;height:14.41px;line-height:14.41px">15</div>
<div class="rh" style="top:328.54px;height:14.41px;line-height:14.41px">16</div>
<div class="rh" style="top:342.95px;height:14.41px;line-height:14.41px">17</div>
<div class="rh" style="top:357.36px;height:14.41px;line-height:14.41px">18</div>
<div class="rh" style="top:371.77px;height:14.41px;line-height:14.41px">19</div>
<div class="rh" style="top:386.18px;height:14.41px;line-height:14.41px">20</div>
<div class="rh" style="top:400.59px;height:14.41px;line-height:14.41px">21</div>
<div class="rh" style="top:415.00px;height:14.41px;line-height:14.41px">22</div>
<div class="rh" style="top:429.41px;height:14.41px;line-height:14.41px">23</div>
<div class="rh" style="top:443.82px;height:14.41px;line-height:14.41px">24</div>
<div class="rh" style="top:458.23px;height:14.41px;line-height:14.41px">25</div>
<div class="rh" style="top:472.64px;height:14.41px;line-height:14.41px">26</div>
<div class="rh" style="top:487.05px;height:14.41px;line-height:14.41px">27</div>
<div class="rh" style="top:501.46px;height:14.41px;line-height:14.41px">28</div>
<div class="rh" style="top:515.87px;height:14.41px;line-height:14.41px">29</div>
<div class="rh" style="top:530.28px;height:14.41px;line-height:14.41px">30</div>
<div class="rh" style="top:544.69px;height:14.41px;line-height:14.41px">31</div>
<div class="cb blue" style="left:20.00px;width:59.50px"></div>
<div class="cb gray" style="left:169.65px;width:90.15px"></div>
<div class="cb gray" style="left:349.95px;width:90.15px"></div>
<div class="cb gray" style="left:530.25px;width:90.15px"></div>
<div class="cb gray" style="left:800.70px;width:90.15px"></div>
<div class="r1" style="top:111.5px;height:15.30px"></div>
<div class="r1s" style="left:169.65px;width:90.15px;top:111.5px;height:15.30px"></div>
<div class="r1s" style="left:349.95px;width:90.15px;top:111.5px;height:15.30px"></div>
<div class="r1s" style="left:530.25px;width:90.15px;top:111.5px;height:15.30px"></div>
<div class="vl" style="left:79.00px;background:#1d479c"></div>
<div class="vl" style="left:169.15px"></div>
<div class="vl" style="left:259.30px"></div>
<div class="vl" style="left:349.45px"></div>
<div class="vl" style="left:439.60px"></div>
<div class="vl" style="left:529.75px"></div>
<div class="vl" style="left:619.90px"></div>
<div class="vl" style="left:710.05px"></div>
<div class="vl" style="left:800.20px"></div>
<div class="vl" style="left:890.35px"></div>
<div class="vl" style="left:980.50px"></div>
<div style="position:absolute;left:0;top:96px;width:20px;height:15.60px;background:#e4e4e4;border-right:1px solid #d6d6d6"></div>
<svg style="position:absolute;left:0;top:96.5px" width="20" height="15" viewBox="0 0 20 15"><path d="M19.6 0 L19.6 13.5 L7.9 13.5 Z" fill="#b4b4b4"/></svg>
<svg style="position:absolute;left:809px;top:100px" width="6" height="6" viewBox="0 0 6 6"><circle cx="3" cy="3" r="1.9" fill="#fff" stroke="#444" stroke-width="0.8"/></svg>
<div style="position:absolute;left:260.5px;top:472.14px;width:89px;height:1px;background:#d4d4d4"></div>
<div style="position:absolute;left:534px;top:472.14px;width:46px;height:1px;background:#b0b0b0"></div>
<div class="t1" style="left:22.50px;top:111.50px;height:15.30px;line-height:15.30px">Name</div>
<div class="t1" style="left:81.50px;top:111.50px;height:15.30px;line-height:15.30px">January</div>
<div class="t1 t1s" style="left:171.65px;top:111.50px;height:15.30px;line-height:15.30px">February</div>
<div class="t1" style="left:261.80px;top:111.50px;height:15.30px;line-height:15.30px">March</div>
<div class="t1 t1s" style="left:351.95px;top:111.50px;height:15.30px;line-height:15.30px">April</div>
<div class="t1" style="left:442.10px;top:111.50px;height:15.30px;line-height:15.30px">May</div>
<div class="t1 t1s" style="left:532.25px;top:111.50px;height:15.30px;line-height:15.30px">June</div>
<div class="t1" style="left:622.40px;top:111.50px;height:15.30px;line-height:15.30px">July</div>
<div class="t1" style="left:712.55px;top:111.50px;height:15.30px;line-height:15.30px">August</div>
<div class="t1" style="left:802.70px;top:111.50px;height:15.30px;line-height:15.30px">September</div>
<div class="t1" style="left:892.85px;top:111.50px;height:15.30px;line-height:15.30px">October</div>
<div class="t1" style="left:983.00px;top:111.50px;height:15.30px;line-height:15.30px">November</div>
<div class="tn" style="left:22.50px;top:126.80px;height:14.41px;line-height:14.41px">John</div>
<div class="td" style="left:79.50px;width:87.95px;top:126.80px;height:14.41px;line-height:14.41px">2680</div>
<div class="td" style="left:169.65px;width:87.95px;top:126.80px;height:14.41px;line-height:14.41px">7512</div>
<div class="td" style="left:259.80px;width:87.95px;top:126.80px;height:14.41px;line-height:14.41px">3332</div>
<div class="td" style="left:349.95px;width:87.95px;top:126.80px;height:14.41px;line-height:14.41px">6213</div>
<div class="td" style="left:440.10px;width:87.95px;top:126.80px;height:14.41px;line-height:14.41px">9621</div>
<div class="td" style="left:530.25px;width:87.95px;top:126.80px;height:14.41px;line-height:14.41px">613</div>
<div class="td" style="left:620.40px;width:87.95px;top:126.80px;height:14.41px;line-height:14.41px">9138</div>
<div class="td" style="left:710.55px;width:87.95px;top:126.80px;height:14.41px;line-height:14.41px">4084</div>
<div class="td" style="left:800.70px;width:87.95px;top:126.80px;height:14.41px;line-height:14.41px">2318</div>
<div class="td" style="left:890.85px;width:87.95px;top:126.80px;height:14.41px;line-height:14.41px">4937</div>
<div class="tn" style="left:22.50px;top:141.21px;height:14.41px;line-height:14.41px">Lucy</div>
<div class="td" style="left:79.50px;width:87.95px;top:141.21px;height:14.41px;line-height:14.41px">2736</div>
<div class="td" style="left:169.65px;width:87.95px;top:141.21px;height:14.41px;line-height:14.41px">2645</div>
<div class="td" style="left:259.80px;width:87.95px;top:141.21px;height:14.41px;line-height:14.41px">3632</div>
<div class="td" style="left:349.95px;width:87.95px;top:141.21px;height:14.41px;line-height:14.41px">60</div>
<div class="td" style="left:440.10px;width:87.95px;top:141.21px;height:14.41px;line-height:14.41px">1767</div>
<div class="td" style="left:530.25px;width:87.95px;top:141.21px;height:14.41px;line-height:14.41px">1098</div>
<div class="td" style="left:620.40px;width:87.95px;top:141.21px;height:14.41px;line-height:14.41px">525</div>
<div class="td" style="left:710.55px;width:87.95px;top:141.21px;height:14.41px;line-height:14.41px">8750</div>
<div class="td" style="left:800.70px;width:87.95px;top:141.21px;height:14.41px;line-height:14.41px">8045</div>
<div class="td" style="left:890.85px;width:87.95px;top:141.21px;height:14.41px;line-height:14.41px">427</div>
<div class="tn" style="left:22.50px;top:155.62px;height:14.41px;line-height:14.41px">George</div>
<div class="td" style="left:79.50px;width:87.95px;top:155.62px;height:14.41px;line-height:14.41px">7234</div>
<div class="td" style="left:169.65px;width:87.95px;top:155.62px;height:14.41px;line-height:14.41px">7506</div>
<div class="td" style="left:259.80px;width:87.95px;top:155.62px;height:14.41px;line-height:14.41px">9867</div>
<div class="td" style="left:349.95px;width:87.95px;top:155.62px;height:14.41px;line-height:14.41px">3842</div>
<div class="td" style="left:440.10px;width:87.95px;top:155.62px;height:14.41px;line-height:14.41px">9565</div>
<div class="td" style="left:530.25px;width:87.95px;top:155.62px;height:14.41px;line-height:14.41px">8293</div>
<div class="td" style="left:620.40px;width:87.95px;top:155.62px;height:14.41px;line-height:14.41px">8877</div>
<div class="td" style="left:710.55px;width:87.95px;top:155.62px;height:14.41px;line-height:14.41px">171</div>
<div class="td" style="left:800.70px;width:87.95px;top:155.62px;height:14.41px;line-height:14.41px">6394</div>
<div class="td" style="left:890.85px;width:87.95px;top:155.62px;height:14.41px;line-height:14.41px">5133</div>
<div class="tn" style="left:22.50px;top:170.03px;height:14.41px;line-height:14.41px">Grace</div>
<div class="td" style="left:79.50px;width:87.95px;top:170.03px;height:14.41px;line-height:14.41px">8710</div>
<div class="td" style="left:169.65px;width:87.95px;top:170.03px;height:14.41px;line-height:14.41px">9102</div>
<div class="td" style="left:259.80px;width:87.95px;top:170.03px;height:14.41px;line-height:14.41px">953</div>
<div class="td" style="left:349.95px;width:87.95px;top:170.03px;height:14.41px;line-height:14.41px">8688</div>
<div class="td" style="left:440.10px;width:87.95px;top:170.03px;height:14.41px;line-height:14.41px">7346</div>
<div class="td" style="left:530.25px;width:87.95px;top:170.03px;height:14.41px;line-height:14.41px">266</div>
<div class="td" style="left:620.40px;width:87.95px;top:170.03px;height:14.41px;line-height:14.41px">3386</div>
<div class="td" style="left:710.55px;width:87.95px;top:170.03px;height:14.41px;line-height:14.41px">7081</div>
<div class="td" style="left:800.70px;width:87.95px;top:170.03px;height:14.41px;line-height:14.41px">1967</div>
<div class="td" style="left:890.85px;width:87.95px;top:170.03px;height:14.41px;line-height:14.41px">6271</div>
<div class="tn" style="left:22.50px;top:184.44px;height:14.41px;line-height:14.41px">Maria</div>
<div class="td" style="left:79.50px;width:87.95px;top:184.44px;height:14.41px;line-height:14.41px">5209</div>
<div class="td" style="left:169.65px;width:87.95px;top:184.44px;height:14.41px;line-height:14.41px">2588</div>
<div class="td" style="left:259.80px;width:87.95px;top:184.44px;height:14.41px;line-height:14.41px">1802</div>
<div class="td" style="left:349.95px;width:87.95px;top:184.44px;height:14.41px;line-height:14.41px">6942</div>
<div class="td" style="left:440.10px;width:87.95px;top:184.44px;height:14.41px;line-height:14.41px">8710</div>
<div class="td" style="left:530.25px;width:87.95px;top:184.44px;height:14.41px;line-height:14.41px">2568</div>
<div class="td" style="left:620.40px;width:87.95px;top:184.44px;height:14.41px;line-height:14.41px">1395</div>
<div class="td" style="left:710.55px;width:87.95px;top:184.44px;height:14.41px;line-height:14.41px">3616</div>
<div class="td" style="left:800.70px;width:87.95px;top:184.44px;height:14.41px;line-height:14.41px">8409</div>
<div class="td" style="left:890.85px;width:87.95px;top:184.44px;height:14.41px;line-height:14.41px">3870</div>
<div class="tn" style="left:22.50px;top:198.85px;height:14.41px;line-height:14.41px">Herman</div>
<div class="td" style="left:79.50px;width:87.95px;top:198.85px;height:14.41px;line-height:14.41px">4164</div>
<div class="td" style="left:169.65px;width:87.95px;top:198.85px;height:14.41px;line-height:14.41px">61</div>
<div class="td" style="left:259.80px;width:87.95px;top:198.85px;height:14.41px;line-height:14.41px">3807</div>
<div class="td" style="left:349.95px;width:87.95px;top:198.85px;height:14.41px;line-height:14.41px">2828</div>
<div class="td" style="left:440.10px;width:87.95px;top:198.85px;height:14.41px;line-height:14.41px">412</div>
<div class="td" style="left:530.25px;width:87.95px;top:198.85px;height:14.41px;line-height:14.41px">3860</div>
<div class="td" style="left:620.40px;width:87.95px;top:198.85px;height:14.41px;line-height:14.41px">8548</div>
<div class="td" style="left:710.55px;width:87.95px;top:198.85px;height:14.41px;line-height:14.41px">1258</div>
<div class="td" style="left:800.70px;width:87.95px;top:198.85px;height:14.41px;line-height:14.41px">2586</div>
<div class="td" style="left:890.85px;width:87.95px;top:198.85px;height:14.41px;line-height:14.41px">2729</div>
<div class="tn" style="left:22.50px;top:213.26px;height:14.41px;line-height:14.41px">Bob</div>
<div class="td" style="left:79.50px;width:87.95px;top:213.26px;height:14.41px;line-height:14.41px">8742</div>
<div class="td" style="left:169.65px;width:87.95px;top:213.26px;height:14.41px;line-height:14.41px">4440</div>
<div class="td" style="left:259.80px;width:87.95px;top:213.26px;height:14.41px;line-height:14.41px">6841</div>
<div class="td" style="left:349.95px;width:87.95px;top:213.26px;height:14.41px;line-height:14.41px">1149</div>
<div class="td" style="left:440.10px;width:87.95px;top:213.26px;height:14.41px;line-height:14.41px">8281</div>
<div class="td" style="left:530.25px;width:87.95px;top:213.26px;height:14.41px;line-height:14.41px">9572</div>
<div class="td" style="left:620.40px;width:87.95px;top:213.26px;height:14.41px;line-height:14.41px">139</div>
<div class="td" style="left:710.55px;width:87.95px;top:213.26px;height:14.41px;line-height:14.41px">4531</div>
<div class="td" style="left:800.70px;width:87.95px;top:213.26px;height:14.41px;line-height:14.41px">6006</div>
<div class="td" style="left:890.85px;width:87.95px;top:213.26px;height:14.41px;line-height:14.41px">5136</div>
<div class="tn" style="left:22.50px;top:227.67px;height:14.41px;line-height:14.41px">Jane</div>
<div class="td" style="left:79.50px;width:87.95px;top:227.67px;height:14.41px;line-height:14.41px">1585</div>
<div class="td" style="left:169.65px;width:87.95px;top:227.67px;height:14.41px;line-height:14.41px">3969</div>
<div class="td" style="left:259.80px;width:87.95px;top:227.67px;height:14.41px;line-height:14.41px">3217</div>
<div class="td" style="left:349.95px;width:87.95px;top:227.67px;height:14.41px;line-height:14.41px">1502</div>
<div class="td" style="left:440.10px;width:87.95px;top:227.67px;height:14.41px;line-height:14.41px">2829</div>
<div class="td" style="left:530.25px;width:87.95px;top:227.67px;height:14.41px;line-height:14.41px">8121</div>
<div class="td" style="left:620.40px;width:87.95px;top:227.67px;height:14.41px;line-height:14.41px">3894</div>
<div class="td" style="left:710.55px;width:87.95px;top:227.67px;height:14.41px;line-height:14.41px">5689</div>
<div class="td" style="left:800.70px;width:87.95px;top:227.67px;height:14.41px;line-height:14.41px">2277</div>
<div class="td" style="left:890.85px;width:87.95px;top:227.67px;height:14.41px;line-height:14.41px">8586</div>
<div class="tn" style="left:22.50px;top:242.08px;height:14.41px;line-height:14.41px">Bill</div>
<div class="td" style="left:79.50px;width:87.95px;top:242.08px;height:14.41px;line-height:14.41px">1897</div>
<div class="td" style="left:169.65px;width:87.95px;top:242.08px;height:14.41px;line-height:14.41px">6931</div>
<div class="td" style="left:259.80px;width:87.95px;top:242.08px;height:14.41px;line-height:14.41px">2824</div>
<div class="td" style="left:349.95px;width:87.95px;top:242.08px;height:14.41px;line-height:14.41px">2453</div>
<div class="td" style="left:440.10px;width:87.95px;top:242.08px;height:14.41px;line-height:14.41px">9455</div>
<div class="td" style="left:530.25px;width:87.95px;top:242.08px;height:14.41px;line-height:14.41px">9691</div>
<div class="td" style="left:620.40px;width:87.95px;top:242.08px;height:14.41px;line-height:14.41px">2689</div>
<div class="td" style="left:710.55px;width:87.95px;top:242.08px;height:14.41px;line-height:14.41px">889</div>
<div class="td" style="left:800.70px;width:87.95px;top:242.08px;height:14.41px;line-height:14.41px">3085</div>
<div class="td" style="left:890.85px;width:87.95px;top:242.08px;height:14.41px;line-height:14.41px">703</div>
<div class="tn" style="left:22.50px;top:256.49px;height:14.41px;line-height:14.41px">Frank</div>
<div class="td" style="left:79.50px;width:87.95px;top:256.49px;height:14.41px;line-height:14.41px">6938</div>
<div class="td" style="left:169.65px;width:87.95px;top:256.49px;height:14.41px;line-height:14.41px">9892</div>
<div class="td" style="left:259.80px;width:87.95px;top:256.49px;height:14.41px;line-height:14.41px">7748</div>
<div class="td" style="left:349.95px;width:87.95px;top:256.49px;height:14.41px;line-height:14.41px">2444</div>
<div class="td" style="left:440.10px;width:87.95px;top:256.49px;height:14.41px;line-height:14.41px">8258</div>
<div class="td" style="left:530.25px;width:87.95px;top:256.49px;height:14.41px;line-height:14.41px">2056</div>
<div class="td" style="left:620.40px;width:87.95px;top:256.49px;height:14.41px;line-height:14.41px">6095</div>
<div class="td" style="left:710.55px;width:87.95px;top:256.49px;height:14.41px;line-height:14.41px">7638</div>
<div class="td" style="left:800.70px;width:87.95px;top:256.49px;height:14.41px;line-height:14.41px">2870</div>
<div class="td" style="left:890.85px;width:87.95px;top:256.49px;height:14.41px;line-height:14.41px">8988</div>
<div class="tn" style="left:22.50px;top:270.90px;height:14.41px;line-height:14.41px">Eric</div>
<div class="td" style="left:79.50px;width:87.95px;top:270.90px;height:14.41px;line-height:14.41px">7372</div>
<div class="td" style="left:169.65px;width:87.95px;top:270.90px;height:14.41px;line-height:14.41px">7578</div>
<div class="td" style="left:259.80px;width:87.95px;top:270.90px;height:14.41px;line-height:14.41px">9343</div>
<div class="td" style="left:349.95px;width:87.95px;top:270.90px;height:14.41px;line-height:14.41px">5462</div>
<div class="td" style="left:440.10px;width:87.95px;top:270.90px;height:14.41px;line-height:14.41px">2726</div>
<div class="td" style="left:530.25px;width:87.95px;top:270.90px;height:14.41px;line-height:14.41px">677</div>
<div class="td" style="left:620.40px;width:87.95px;top:270.90px;height:14.41px;line-height:14.41px">6875</div>
<div class="td" style="left:710.55px;width:87.95px;top:270.90px;height:14.41px;line-height:14.41px">2186</div>
<div class="td" style="left:800.70px;width:87.95px;top:270.90px;height:14.41px;line-height:14.41px">6945</div>
<div class="td" style="left:890.85px;width:87.95px;top:270.90px;height:14.41px;line-height:14.41px">73</div>
<div class="tn" style="left:22.50px;top:285.31px;height:14.41px;line-height:14.41px">Dave</div>
<div class="td" style="left:79.50px;width:87.95px;top:285.31px;height:14.41px;line-height:14.41px">8476</div>
<div class="td" style="left:169.65px;width:87.95px;top:285.31px;height:14.41px;line-height:14.41px">4981</div>
<div class="td" style="left:259.80px;width:87.95px;top:285.31px;height:14.41px;line-height:14.41px">2249</div>
<div class="td" style="left:349.95px;width:87.95px;top:285.31px;height:14.41px;line-height:14.41px">2656</div>
<div class="td" style="left:440.10px;width:87.95px;top:285.31px;height:14.41px;line-height:14.41px">9458</div>
<div class="td" style="left:530.25px;width:87.95px;top:285.31px;height:14.41px;line-height:14.41px">6387</div>
<div class="td" style="left:620.40px;width:87.95px;top:285.31px;height:14.41px;line-height:14.41px">4025</div>
<div class="td" style="left:710.55px;width:87.95px;top:285.31px;height:14.41px;line-height:14.41px">9205</div>
<div class="td" style="left:800.70px;width:87.95px;top:285.31px;height:14.41px;line-height:14.41px">6381</div>
<div class="td" style="left:890.85px;width:87.95px;top:285.31px;height:14.41px;line-height:14.41px">2585</div>
<div class="tn" style="left:22.50px;top:299.72px;height:14.41px;line-height:14.41px">Jimmy</div>
<div class="td" style="left:79.50px;width:87.95px;top:299.72px;height:14.41px;line-height:14.41px">5416</div>
<div class="td" style="left:169.65px;width:87.95px;top:299.72px;height:14.41px;line-height:14.41px">2974</div>
<div class="td" style="left:259.80px;width:87.95px;top:299.72px;height:14.41px;line-height:14.41px">1357</div>
<div class="td" style="left:349.95px;width:87.95px;top:299.72px;height:14.41px;line-height:14.41px">8478</div>
<div class="td" style="left:440.10px;width:87.95px;top:299.72px;height:14.41px;line-height:14.41px">760</div>
<div class="td" style="left:530.25px;width:87.95px;top:299.72px;height:14.41px;line-height:14.41px">5240</div>
<div class="td" style="left:620.40px;width:87.95px;top:299.72px;height:14.41px;line-height:14.41px">2087</div>
<div class="td" style="left:710.55px;width:87.95px;top:299.72px;height:14.41px;line-height:14.41px">1581</div>
<div class="td" style="left:800.70px;width:87.95px;top:299.72px;height:14.41px;line-height:14.41px">7261</div>
<div class="td" style="left:890.85px;width:87.95px;top:299.72px;height:14.41px;line-height:14.41px">4874</div>
<div class="tn" style="left:22.50px;top:314.13px;height:14.41px;line-height:14.41px">John</div>
<div class="td" style="left:79.50px;width:87.95px;top:314.13px;height:14.41px;line-height:14.41px">7810</div>
<div class="td" style="left:169.65px;width:87.95px;top:314.13px;height:14.41px;line-height:14.41px">3780</div>
<div class="td" style="left:259.80px;width:87.95px;top:314.13px;height:14.41px;line-height:14.41px">2495</div>
<div class="td" style="left:349.95px;width:87.95px;top:314.13px;height:14.41px;line-height:14.41px">8808</div>
<div class="td" style="left:440.10px;width:87.95px;top:314.13px;height:14.41px;line-height:14.41px">3647</div>
<div class="td" style="left:530.25px;width:87.95px;top:314.13px;height:14.41px;line-height:14.41px">4753</div>
<div class="td" style="left:620.40px;width:87.95px;top:314.13px;height:14.41px;line-height:14.41px">6054</div>
<div class="td" style="left:710.55px;width:87.95px;top:314.13px;height:14.41px;line-height:14.41px">3817</div>
<div class="td" style="left:800.70px;width:87.95px;top:314.13px;height:14.41px;line-height:14.41px">8947</div>
<div class="td" style="left:890.85px;width:87.95px;top:314.13px;height:14.41px;line-height:14.41px">8661</div>
<div class="tn" style="left:22.50px;top:328.54px;height:14.41px;line-height:14.41px">Lucy</div>
<div class="td" style="left:79.50px;width:87.95px;top:328.54px;height:14.41px;line-height:14.41px">3738</div>
<div class="td" style="left:169.65px;width:87.95px;top:328.54px;height:14.41px;line-height:14.41px">3071</div>
<div class="td" style="left:259.80px;width:87.95px;top:328.54px;height:14.41px;line-height:14.41px">4197</div>
<div class="td" style="left:349.95px;width:87.95px;top:328.54px;height:14.41px;line-height:14.41px">9296</div>
<div class="td" style="left:440.10px;width:87.95px;top:328.54px;height:14.41px;line-height:14.41px">4815</div>
<div class="td" style="left:530.25px;width:87.95px;top:328.54px;height:14.41px;line-height:14.41px">2171</div>
<div class="td" style="left:620.40px;width:87.95px;top:328.54px;height:14.41px;line-height:14.41px">5164</div>
<div class="td" style="left:710.55px;width:87.95px;top:328.54px;height:14.41px;line-height:14.41px">3674</div>
<div class="td" style="left:800.70px;width:87.95px;top:328.54px;height:14.41px;line-height:14.41px">3740</div>
<div class="td" style="left:890.85px;width:87.95px;top:328.54px;height:14.41px;line-height:14.41px">7252</div>
<div class="tn" style="left:22.50px;top:342.95px;height:14.41px;line-height:14.41px">George</div>
<div class="td" style="left:79.50px;width:87.95px;top:342.95px;height:14.41px;line-height:14.41px">4157</div>
<div class="td" style="left:169.65px;width:87.95px;top:342.95px;height:14.41px;line-height:14.41px">1401</div>
<div class="td" style="left:259.80px;width:87.95px;top:342.95px;height:14.41px;line-height:14.41px">1341</div>
<div class="td" style="left:349.95px;width:87.95px;top:342.95px;height:14.41px;line-height:14.41px">3565</div>
<div class="td" style="left:440.10px;width:87.95px;top:342.95px;height:14.41px;line-height:14.41px">3516</div>
<div class="td" style="left:530.25px;width:87.95px;top:342.95px;height:14.41px;line-height:14.41px">9511</div>
<div class="td" style="left:620.40px;width:87.95px;top:342.95px;height:14.41px;line-height:14.41px">3693</div>
<div class="td" style="left:710.55px;width:87.95px;top:342.95px;height:14.41px;line-height:14.41px">4497</div>
<div class="td" style="left:800.70px;width:87.95px;top:342.95px;height:14.41px;line-height:14.41px">705</div>
<div class="td" style="left:890.85px;width:87.95px;top:342.95px;height:14.41px;line-height:14.41px">1560</div>
<div class="tn" style="left:22.50px;top:357.36px;height:14.41px;line-height:14.41px">Grace</div>
<div class="td" style="left:79.50px;width:87.95px;top:357.36px;height:14.41px;line-height:14.41px">7496</div>
<div class="td" style="left:169.65px;width:87.95px;top:357.36px;height:14.41px;line-height:14.41px">3856</div>
<div class="td" style="left:259.80px;width:87.95px;top:357.36px;height:14.41px;line-height:14.41px">3508</div>
<div class="td" style="left:349.95px;width:87.95px;top:357.36px;height:14.41px;line-height:14.41px">1235</div>
<div class="td" style="left:440.10px;width:87.95px;top:357.36px;height:14.41px;line-height:14.41px">3518</div>
<div class="td" style="left:530.25px;width:87.95px;top:357.36px;height:14.41px;line-height:14.41px">9336</div>
<div class="td" style="left:620.40px;width:87.95px;top:357.36px;height:14.41px;line-height:14.41px">1623</div>
<div class="td" style="left:710.55px;width:87.95px;top:357.36px;height:14.41px;line-height:14.41px">6936</div>
<div class="td" style="left:800.70px;width:87.95px;top:357.36px;height:14.41px;line-height:14.41px">8781</div>
<div class="td" style="left:890.85px;width:87.95px;top:357.36px;height:14.41px;line-height:14.41px">3199</div>
<div class="tn" style="left:22.50px;top:371.77px;height:14.41px;line-height:14.41px">Maria</div>
<div class="td" style="left:79.50px;width:87.95px;top:371.77px;height:14.41px;line-height:14.41px">9710</div>
<div class="td" style="left:169.65px;width:87.95px;top:371.77px;height:14.41px;line-height:14.41px">8203</div>
<div class="td" style="left:259.80px;width:87.95px;top:371.77px;height:14.41px;line-height:14.41px">9901</div>
<div class="td" style="left:349.95px;width:87.95px;top:371.77px;height:14.41px;line-height:14.41px">2761</div>
<div class="td" style="left:440.10px;width:87.95px;top:371.77px;height:14.41px;line-height:14.41px">9186</div>
<div class="td" style="left:530.25px;width:87.95px;top:371.77px;height:14.41px;line-height:14.41px">7024</div>
<div class="td" style="left:620.40px;width:87.95px;top:371.77px;height:14.41px;line-height:14.41px">6115</div>
<div class="td" style="left:710.55px;width:87.95px;top:371.77px;height:14.41px;line-height:14.41px">3019</div>
<div class="td" style="left:800.70px;width:87.95px;top:371.77px;height:14.41px;line-height:14.41px">6472</div>
<div class="td" style="left:890.85px;width:87.95px;top:371.77px;height:14.41px;line-height:14.41px">3070</div>
<div class="tn" style="left:22.50px;top:386.18px;height:14.41px;line-height:14.41px">Herman</div>
<div class="td" style="left:79.50px;width:87.95px;top:386.18px;height:14.41px;line-height:14.41px">4710</div>
<div class="td" style="left:169.65px;width:87.95px;top:386.18px;height:14.41px;line-height:14.41px">1077</div>
<div class="td" style="left:259.80px;width:87.95px;top:386.18px;height:14.41px;line-height:14.41px">6687</div>
<div class="td" style="left:349.95px;width:87.95px;top:386.18px;height:14.41px;line-height:14.41px">1823</div>
<div class="td" style="left:440.10px;width:87.95px;top:386.18px;height:14.41px;line-height:14.41px">9685</div>
<div class="tn" style="left:22.50px;top:400.59px;height:14.41px;line-height:14.41px">Bob</div>
<div class="td" style="left:79.50px;width:87.95px;top:400.59px;height:14.41px;line-height:14.41px">5678</div>
<div class="td" style="left:169.65px;width:87.95px;top:400.59px;height:14.41px;line-height:14.41px">9150</div>
<div class="td" style="left:259.80px;width:87.95px;top:400.59px;height:14.41px;line-height:14.41px">1873</div>
<div class="td" style="left:349.95px;width:87.95px;top:400.59px;height:14.41px;line-height:14.41px">8062</div>
<div class="td" style="left:440.10px;width:87.95px;top:400.59px;height:14.41px;line-height:14.41px">3454</div>
<div class="tn" style="left:22.50px;top:415.00px;height:14.41px;line-height:14.41px">Jane</div>
<div class="td" style="left:79.50px;width:87.95px;top:415.00px;height:14.41px;line-height:14.41px">5051</div>
<div class="td" style="left:169.65px;width:87.95px;top:415.00px;height:14.41px;line-height:14.41px">2462</div>
<div class="td" style="left:259.80px;width:87.95px;top:415.00px;height:14.41px;line-height:14.41px">5300</div>
<div class="td" style="left:349.95px;width:87.95px;top:415.00px;height:14.41px;line-height:14.41px">9918</div>
<div class="td" style="left:440.10px;width:87.95px;top:415.00px;height:14.41px;line-height:14.41px">3398</div>
<div class="tn" style="left:22.50px;top:429.41px;height:14.41px;line-height:14.41px">Bill</div>
<div class="td" style="left:79.50px;width:87.95px;top:429.41px;height:14.41px;line-height:14.41px">8331</div>
<div class="td" style="left:169.65px;width:87.95px;top:429.41px;height:14.41px;line-height:14.41px">1718</div>
<div class="td" style="left:259.80px;width:87.95px;top:429.41px;height:14.41px;line-height:14.41px">1790</div>
<div class="td" style="left:349.95px;width:87.95px;top:429.41px;height:14.41px;line-height:14.41px">3427</div>
<div class="td" style="left:440.10px;width:87.95px;top:429.41px;height:14.41px;line-height:14.41px">6427</div>
<div class="tn" style="left:22.50px;top:443.82px;height:14.41px;line-height:14.41px">Frank</div>
<div class="td" style="left:79.50px;width:87.95px;top:443.82px;height:14.41px;line-height:14.41px">6172</div>
<div class="td" style="left:169.65px;width:87.95px;top:443.82px;height:14.41px;line-height:14.41px">9046</div>
<div class="td" style="left:259.80px;width:87.95px;top:443.82px;height:14.41px;line-height:14.41px">1532</div>
<div class="td" style="left:349.95px;width:87.95px;top:443.82px;height:14.41px;line-height:14.41px">3545</div>
<div class="td" style="left:440.10px;width:87.95px;top:443.82px;height:14.41px;line-height:14.41px">2372</div>
<div class="tn" style="left:22.50px;top:458.23px;height:14.41px;line-height:14.41px">Eric</div>
<div class="td" style="left:79.50px;width:87.95px;top:458.23px;height:14.41px;line-height:14.41px">9350</div>
<div class="td" style="left:169.65px;width:87.95px;top:458.23px;height:14.41px;line-height:14.41px">5073</div>
<div class="td" style="left:259.80px;width:87.95px;top:458.23px;height:14.41px;line-height:14.41px">1511</div>
<div class="td" style="left:349.95px;width:87.95px;top:458.23px;height:14.41px;line-height:14.41px">4468</div>
<div class="td" style="left:440.10px;width:87.95px;top:458.23px;height:14.41px;line-height:14.41px">6325</div>
<div class="tn" style="left:22.50px;top:472.64px;height:14.41px;line-height:14.41px">Dave</div>
<div class="td" style="left:79.50px;width:87.95px;top:472.64px;height:14.41px;line-height:14.41px">7153</div>
<div class="td" style="left:169.65px;width:87.95px;top:472.64px;height:14.41px;line-height:14.41px">7969</div>
<div class="td" style="left:259.80px;width:87.95px;top:472.64px;height:14.41px;line-height:14.41px">4711</div>
<div class="td" style="left:349.95px;width:87.95px;top:472.64px;height:14.41px;line-height:14.41px">6310</div>
<div class="td" style="left:440.10px;width:87.95px;top:472.64px;height:14.41px;line-height:14.41px">3666</div>
<div class="td" style="left:530.25px;width:87.95px;top:472.64px;height:14.41px;line-height:14.41px">1962</div>
<div class="td" style="left:620.40px;width:87.95px;top:472.64px;height:14.41px;line-height:14.41px">5654</div>
<div class="td" style="left:710.55px;width:87.95px;top:472.64px;height:14.41px;line-height:14.41px">912</div>
<div class="td" style="left:800.70px;width:87.95px;top:472.64px;height:14.41px;line-height:14.41px">5493</div>
<div class="td" style="left:890.85px;width:87.95px;top:472.64px;height:14.41px;line-height:14.41px">4233</div>
<div class="tn" style="left:22.50px;top:487.05px;height:14.41px;line-height:14.41px">Jimmy</div>
<div class="td" style="left:79.50px;width:87.95px;top:487.05px;height:14.41px;line-height:14.41px">2646</div>
<div class="td" style="left:169.65px;width:87.95px;top:487.05px;height:14.41px;line-height:14.41px">8903</div>
<div class="td" style="left:259.80px;width:87.95px;top:487.05px;height:14.41px;line-height:14.41px">8023</div>
<div class="td" style="left:349.95px;width:87.95px;top:487.05px;height:14.41px;line-height:14.41px">1819</div>
<div class="td" style="left:440.10px;width:87.95px;top:487.05px;height:14.41px;line-height:14.41px">3588</div>
<div class="td" style="left:530.25px;width:87.95px;top:487.05px;height:14.41px;line-height:14.41px">8701</div>
<div class="td" style="left:620.40px;width:87.95px;top:487.05px;height:14.41px;line-height:14.41px">4048</div>
<div class="td" style="left:710.55px;width:87.95px;top:487.05px;height:14.41px;line-height:14.41px">3655</div>
<div class="td" style="left:800.70px;width:87.95px;top:487.05px;height:14.41px;line-height:14.41px">9646</div>
<div class="td" style="left:890.85px;width:87.95px;top:487.05px;height:14.41px;line-height:14.41px">7364</div>
<div class="tn" style="left:22.50px;top:501.46px;height:14.41px;line-height:14.41px">John</div>
<div class="td" style="left:79.50px;width:87.95px;top:501.46px;height:14.41px;line-height:14.41px">6078</div>
<div class="td" style="left:169.65px;width:87.95px;top:501.46px;height:14.41px;line-height:14.41px">1851</div>
<div class="td" style="left:259.80px;width:87.95px;top:501.46px;height:14.41px;line-height:14.41px">9201</div>
<div class="td" style="left:349.95px;width:87.95px;top:501.46px;height:14.41px;line-height:14.41px">3186</div>
<div class="td" style="left:440.10px;width:87.95px;top:501.46px;height:14.41px;line-height:14.41px">8348</div>
<div class="td" style="left:530.25px;width:87.95px;top:501.46px;height:14.41px;line-height:14.41px">8134</div>
<div class="td" style="left:620.40px;width:87.95px;top:501.46px;height:14.41px;line-height:14.41px">1005</div>
<div class="td" style="left:710.55px;width:87.95px;top:501.46px;height:14.41px;line-height:14.41px">285</div>
<div class="td" style="left:800.70px;width:87.95px;top:501.46px;height:14.41px;line-height:14.41px">9754</div>
<div class="td" style="left:890.85px;width:87.95px;top:501.46px;height:14.41px;line-height:14.41px">4294</div>
<div class="tn" style="left:22.50px;top:515.87px;height:14.41px;line-height:14.41px">Lucy</div>
<div class="td" style="left:79.50px;width:87.95px;top:515.87px;height:14.41px;line-height:14.41px">5984</div>
<div class="td" style="left:169.65px;width:87.95px;top:515.87px;height:14.41px;line-height:14.41px">1950</div>
<div class="td" style="left:259.80px;width:87.95px;top:515.87px;height:14.41px;line-height:14.41px">5385</div>
<div class="td" style="left:349.95px;width:87.95px;top:515.87px;height:14.41px;line-height:14.41px">3115</div>
<div class="td" style="left:440.10px;width:87.95px;top:515.87px;height:14.41px;line-height:14.41px">6923</div>
<div class="td" style="left:530.25px;width:87.95px;top:515.87px;height:14.41px;line-height:14.41px">7023</div>
<div class="td" style="left:620.40px;width:87.95px;top:515.87px;height:14.41px;line-height:14.41px">8722</div>
<div class="td" style="left:710.55px;width:87.95px;top:515.87px;height:14.41px;line-height:14.41px">1609</div>
<div class="td" style="left:800.70px;width:87.95px;top:515.87px;height:14.41px;line-height:14.41px">144</div>
<div class="td" style="left:890.85px;width:87.95px;top:515.87px;height:14.41px;line-height:14.41px">5321</div>
<div class="tn" style="left:22.50px;top:530.28px;height:14.41px;line-height:14.41px">George</div>
<div class="td" style="left:79.50px;width:87.95px;top:530.28px;height:14.41px;line-height:14.41px">5520</div>
<div class="td" style="left:169.65px;width:87.95px;top:530.28px;height:14.41px;line-height:14.41px">3606</div>
<div class="td" style="left:259.80px;width:87.95px;top:530.28px;height:14.41px;line-height:14.41px">4683</div>
<div class="td" style="left:349.95px;width:87.95px;top:530.28px;height:14.41px;line-height:14.41px">6179</div>
<div class="td" style="left:440.10px;width:87.95px;top:530.28px;height:14.41px;line-height:14.41px">2588</div>
<div class="td" style="left:530.25px;width:87.95px;top:530.28px;height:14.41px;line-height:14.41px">7753</div>
<div class="td" style="left:620.40px;width:87.95px;top:530.28px;height:14.41px;line-height:14.41px">7419</div>
<div class="td" style="left:710.55px;width:87.95px;top:530.28px;height:14.41px;line-height:14.41px">2961</div>
<div class="td" style="left:800.70px;width:87.95px;top:530.28px;height:14.41px;line-height:14.41px">6514</div>
<div class="td" style="left:890.85px;width:87.95px;top:530.28px;height:14.41px;line-height:14.41px">8410</div>
<div class="tn" style="left:22.50px;top:544.69px;height:14.41px;line-height:14.41px">Grace</div>
<div class="td" style="left:79.50px;width:87.95px;top:544.69px;height:14.41px;line-height:14.41px">4509</div>
<div class="td" style="left:169.65px;width:87.95px;top:544.69px;height:14.41px;line-height:14.41px">4537</div>
<div class="td" style="left:259.80px;width:87.95px;top:544.69px;height:14.41px;line-height:14.41px">1514</div>
<div class="td" style="left:349.95px;width:87.95px;top:544.69px;height:14.41px;line-height:14.41px">667</div>
<div class="td" style="left:440.10px;width:87.95px;top:544.69px;height:14.41px;line-height:14.41px">221</div>
<div class="td" style="left:530.25px;width:87.95px;top:544.69px;height:14.41px;line-height:14.41px">3690</div>
<div class="td" style="left:620.40px;width:87.95px;top:544.69px;height:14.41px;line-height:14.41px">7252</div>
<div class="td" style="left:710.55px;width:87.95px;top:544.69px;height:14.41px;line-height:14.41px">9556</div>
<div class="td" style="left:800.70px;width:87.95px;top:544.69px;height:14.41px;line-height:14.41px">2355</div>
<div class="td" style="left:890.85px;width:87.95px;top:544.69px;height:14.41px;line-height:14.41px">1004</div>
</div>
<div id="banner"></div>
<div class="bw" style="left:607.90px;top:417.20px;font-size:30.9px;transform:scaleX(0.9000)">Press</div>
<div class="bw" style="left:691.76px;top:417.20px;font-size:30.9px;transform:scaleX(0.9404)">and</div>
<div class="bw" style="left:750.96px;top:417.20px;font-size:30.9px;transform:scaleX(0.9200)">Hold</div>
<div class="bw" style="left:823.30px;top:417.20px;font-size:30.9px;transform:scaleX(0.9311)">the</div>
<div class="bw" style="left:874.19px;top:412.20px;font-size:36.2px;transform:scaleX(0.9534)">Ctrl</div>
<div class="bw" style="left:942.31px;top:417.20px;font-size:30.9px;transform:scaleX(0.8926)">Key</div>
</body></html>
